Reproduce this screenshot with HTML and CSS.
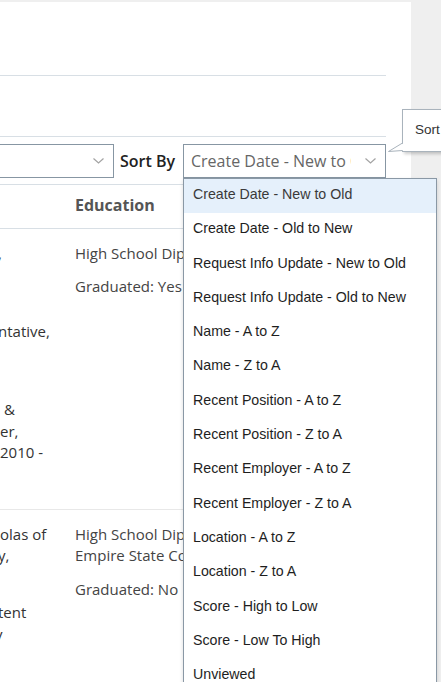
FILE: index.html
```html
<!DOCTYPE html>
<html lang="en">
<head>
    <meta charset="UTF-8">
    <meta name="viewport" content="width=device-width, initial-scale=1.0">
    <title>Applicants</title>
    <link rel="stylesheet" href="styles.css">
</head>
<body>
    <div class="panel">
        <div class="head"></div>
        <div class="subhead"></div>

        <div class="toolbar">
            <div class="select select-filter">
                <span class="select-text"></span>
                <svg class="chev" viewBox="0 0 11 6"><polyline points="0.5,0.5 5.5,5 10.5,0.5" fill="none" stroke="#a3a3a3" stroke-width="1.2"/></svg>
            </div>
            <label class="sort-label">Sort By</label>
            <div class="sort-wrap">
                <div class="select">
                    <span class="select-text">Create Date - New to Old</span>
                    <svg class="chev" viewBox="0 0 11 6"><polyline points="0.5,0.5 5.5,5 10.5,0.5" fill="none" stroke="#a3a3a3" stroke-width="1.2"/></svg>
                </div>
                <ul class="menu">
                    <li class="active">Create Date - New to Old</li>
                    <li>Create Date - Old to New</li>
                    <li>Request Info Update - New to Old</li>
                    <li>Request Info Update - Old to New</li>
                    <li>Name - A to Z</li>
                    <li>Name - Z to A</li>
                    <li>Recent Position - A to Z</li>
                    <li>Recent Position - Z to A</li>
                    <li>Recent Employer - A to Z</li>
                    <li>Recent Employer - Z to A</li>
                    <li>Location - A to Z</li>
                    <li>Location - Z to A</li>
                    <li>Score - High to Low</li>
                    <li>Score - Low To High</li>
                    <li>Unviewed</li>
                </ul>
                <div class="tip">
                    <svg class="tip-arrow" width="17" height="12" viewBox="0 0 17 12">
                        <polygon points="16,1 0.5,9.5 16,8.5" fill="#fff"/>
                        <polyline points="14.5,1 0.5,9.5 14.5,8.5" fill="none" stroke="#a9b3bc" stroke-width="1"/>
                    </svg>
                    Sort
                </div>
            </div>
        </div>

        <div class="table">
            <div class="thead">
                <div></div>
                <div>Education</div>
            </div>

            <div class="tr">
                <div class="cut">
                    <div class="blk">
                        <div class="nudge">,</div>
                        <div>&nbsp;</div>
                        <div>&nbsp;</div>
                    </div>
                    <div class="blk">
                        <div class="nudge">ntative,</div>
                        <div>&nbsp;</div>
                    </div>
                    <div class="blk">
                        <div>&nbsp;</div>
                        <div>&nbsp;&amp;</div>
                        <div>er,</div>
                        <div>2010 -</div>
                    </div>
                </div>
                <div class="edu">
                    <div class="edu-blk">High School Diploma</div>
                    <div class="edu-blk">Graduated: Yes</div>
                </div>
            </div>

            <div class="tr">
                <div class="cut">
                    <div class="blk">
                        <div>olas of</div>
                        <div class="nudge">y,</div>
                        <div>&nbsp;</div>
                    </div>
                    <div class="blk">
                        <div class="nudge">tent</div>
                        <div class="nudge-far">v</div>
                    </div>
                </div>
                <div class="edu">
                    <div class="edu-blk">High School Diploma<br>Empire State College</div>
                    <div class="edu-blk">Graduated: No</div>
                </div>
            </div>
        </div>
    </div>
</body>
</html>
```

FILE: styles.css
```css
body {
    margin: 0;
    background-color: #efefef;
    font-family: "Open Sans", Arial, sans-serif;
    color: #333;
    overflow: hidden;
}
.panel {
    width: 411px;
    height: 680px;
    margin-top: 2px;
    padding-right: 25px;
    box-sizing: border-box;
    background: #fff;
}
.head {
    height: 73px;
    border-bottom: 1px solid #d8dfe5;
}
.subhead {
    height: 60px;
    border-bottom: 1px solid #d8dfe5;
}
.toolbar {
    display: flex;
    align-items: center;
    padding: 7px 0 6px;
    border-bottom: 1px solid #d8dfe5;
}
.select {
    display: flex;
    align-items: center;
    gap: 14px;
    height: 34px;
    padding: 0 9px 0 7px;
    box-sizing: border-box;
    border: 1px solid #8796a3;
    background: #fff;
}
.select-filter {
    flex: 1;
    margin-left: -1px;
}
.select-text {
    flex: 1;
    overflow: hidden;
    white-space: nowrap;
    font-size: 16px;
    color: #666;
}
.chev {
    width: 11px;
    height: 6px;
    flex-shrink: 0;
}
.sort-label {
    margin: 0 8px 0 6px;
    font-size: 16px;
    font-weight: 600;
    color: #222;
}
.sort-wrap {
    position: relative;
    width: 203px;
    flex-shrink: 0;
}
.menu {
    position: absolute;
    top: 100%;
    left: 0;
    width: 254px;
    margin: 0;
    padding: 0;
    list-style: none;
    box-sizing: border-box;
    background: #fff;
    border: 1px solid #8a98a5;
    box-shadow: 0 2px 4px rgba(0, 0, 0, 0.15);
    z-index: 2;
    font-family: "Liberation Sans", Arial, sans-serif;
    font-size: 14.2px;
    color: #1e1e1e;
}
.menu li {
    height: 34.3px;
    padding: 7px 9px 0;
    box-sizing: border-box;
    line-height: 17px;
    white-space: nowrap;
}
.menu li.active {
    background: #e5f0fb;
    color: #3a3a3a;
}
.tip {
    position: absolute;
    left: 219px;
    top: -35px;
    width: 80px;
    height: 43px;
    padding: 12px 0 0 12px;
    box-sizing: border-box;
    border: 1px solid #a9b3bc;
    background: #fff;
    box-shadow: 2px 2px 3px rgba(0, 0, 0, 0.2);
    z-index: 3;
    font-family: "Liberation Sans", Arial, sans-serif;
    font-size: 13.5px;
    color: #333;
}
.tip-arrow {
    position: absolute;
    left: -15px;
    top: 32px;
    overflow: visible;
}
.thead, .tr {
    display: grid;
    grid-template-columns: 60px 1fr;
    column-gap: 15px;
}
.thead {
    height: 44px;
    padding-top: 9px;
    box-sizing: border-box;
    border-bottom: 1px solid #d8dfe5;
    font-size: 16px;
    font-weight: 700;
    color: #555;
}
.tr {
    height: 281px;
    padding-top: 14px;
    box-sizing: border-box;
    border-bottom: 1px solid #e8e8e8;
    font-size: 15px;
    line-height: 21.4px;
}
.cut {
    overflow: hidden;
    white-space: nowrap;
}
.blk + .blk {
    margin-top: 14px;
}
.nudge {
    margin-left: -2px;
}
.nudge-far {
    margin-left: -5px;
}
.edu {
    white-space: nowrap;
    color: #444;
}
.edu-blk + .edu-blk {
    margin-top: 12px;
}
```
